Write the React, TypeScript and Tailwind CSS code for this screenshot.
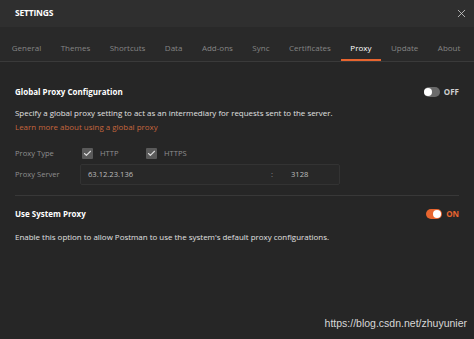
import { X, Check } from 'lucide-react'

const tabs = ['General', 'Themes', 'Shortcuts', 'Data', 'Add-ons', 'Sync', 'Certificates', 'Proxy', 'Update', 'About']

function Toggle({ on }: { on: boolean }) {
  return (
    <div className="flex items-center gap-[4px]">
      <div
        className={
          'relative w-[16px] h-[10px] rounded-full ' + (on ? 'bg-[#e8652f]' : 'bg-[#6a6a6a]')
        }
      >
        <div
          className={
            'absolute top-[1px] w-[8px] h-[8px] rounded-full bg-white ' + (on ? 'right-[1px]' : 'left-[0px]')
          }
        />
      </div>
      <span className={'text-[8px] font-bold ' + (on ? 'text-[#e8652f]' : 'text-[#d0d0d0]')}>{on ? 'ON' : 'OFF'}</span>
    </div>
  )
}

function Box() {
  return (
    <div className="w-[11px] h-[11px] rounded-[1px] bg-[#5a5a5a] flex items-center justify-center">
      <Check className="w-[9px] h-[9px] text-[#dcdcdc]" strokeWidth={3} />
    </div>
  )
}

export default function App() {
  return (
    <div
      className="w-[474px] h-[339px] bg-[#262626] text-[#e6e6e6] flex flex-col overflow-hidden"
      style={{ fontFamily: '"Open Sans", "Noto Sans", sans-serif' }}
    >
      {/* Header */}
      <div className="h-[27px] bg-[#2f2f2f] flex items-center justify-between pl-[15px] pr-[6px]">
        <span className="text-[8.5px] font-bold text-white tracking-tight">SETTINGS</span>
        <X className="w-[13px] h-[13px] text-[#cfcfcf]" strokeWidth={1.5} />
      </div>

      {/* Tabs */}
      <div className="h-[35px] bg-[#292929] border-b border-[#3a3a3a] flex items-stretch pl-[2px]">
        {tabs.map((t) => (
          <div
            key={t}
            className={
              'relative flex items-center whitespace-nowrap px-[9.75px] pt-[8px] text-[8px] ' +
              (t === 'Proxy' ? 'text-white' : 'text-[#858585]')
            }
          >
            {t}
            {t === 'Proxy' ? (
              <div className="absolute left-[0px] right-[0px] bottom-[0px] h-[2px] bg-[#e8652f]" />
            ) : null}
          </div>
        ))}
      </div>

      {/* Content */}
      <div className="flex flex-col px-[15px] pt-[23px]">
        <div className="flex items-center justify-between h-[14px]">
          <span className="text-[8px] font-bold text-white">Global Proxy Configuration</span>
          <Toggle on={false} />
        </div>
        <p className="mt-[7px] text-[7.95px] text-[#e0e0e0] leading-[14px]">
          Specify a global proxy setting to act as an intermediary for requests sent to the server.
        </p>
        <p className="text-[7.95px] text-[#c5653d] leading-[14px]">Learn more about using a global proxy</p>

        <div className="mt-[13px] flex items-center h-[14px] text-[7.6px] text-[#8f8f8f]">
          <span className="w-[67px]">Proxy Type</span>
          <div className="flex items-center gap-[7px] w-[64px]">
            <Box />
            <span>HTTP</span>
          </div>
          <div className="flex items-center gap-[7px]">
            <Box />
            <span>HTTPS</span>
          </div>
        </div>

        <div className="mt-[3px] flex items-center text-[7.6px]">
          <span className="w-[65px] text-[#8f8f8f]">Proxy Server</span>
          <div className="w-[260px] h-[21px] bg-[#282828] border border-[#333333] rounded-[2px] flex items-center">
            <span className="pl-[7px] w-[190px] text-[#bdbdbd]">63.12.23.136</span>
            <span className="text-[#8f8f8f] w-[20px]">:</span>
            <span className="text-[#bdbdbd]">3128</span>
          </div>
        </div>

        <div className="mt-[10px] border-t border-[#383838]" />

        <div className="mt-[11px] flex items-center justify-between h-[14px]">
          <span className="text-[8px] font-bold text-white">Use System Proxy</span>
          <Toggle on={true} />
        </div>
        <p className="mt-[9px] text-[7.95px] text-[#e0e0e0] leading-[14px]">
          Enable this option to allow Postman to use the system's default proxy configurations.
        </p>
      </div>

      <div className="mt-auto flex justify-end pr-[7px] pb-[7px]">
        <span
          className="text-[10.5px] text-[#d8d8d8]"
          style={{ fontFamily: '"Liberation Sans", Arial, sans-serif' }}
        >
          https://blog.csdn.net/zhuyunier
        </span>
      </div>
    </div>
  )
}
